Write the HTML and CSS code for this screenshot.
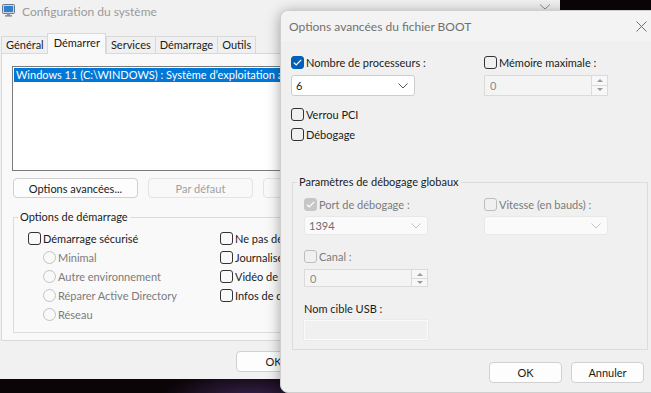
FILE: index.html
```html
<!DOCTYPE html>
<html lang="fr">
<head>
    <meta charset="UTF-8">
    <title>Configuration du système</title>
    <link rel="stylesheet" href="styles.css">
</head>
<body>

    <!-- fenêtre msconfig, en arrière-plan -->
    <div class="window msconfig">
        <div class="titlebar">
            <svg class="app-icon" width="14" height="14" viewBox="0 0 14 14">
                <rect x="0.5" y="1.5" width="12" height="9" rx="1" fill="#cfd6de" stroke="#6b7785"/>
                <rect x="2" y="3" width="9" height="6" fill="#2f7fd3"/>
                <rect x="5" y="10.5" width="3" height="2" fill="#8a95a3"/>
                <rect x="3" y="12.3" width="7" height="1.2" fill="#6b7785"/>
            </svg>
            <span class="title">Configuration du système</span>
            <svg class="title-chevron" width="12" height="6" viewBox="0 0 12 6">
                <polyline points="1,0.5 6,5 11,0.5" fill="none" stroke="#8a8a8a"/>
            </svg>
        </div>

        <div class="tabs">
            <div class="tab">Général</div>
            <div class="tab active">Démarrer</div>
            <div class="tab">Services</div>
            <div class="tab">Démarrage</div>
            <div class="tab">Outils</div>
        </div>

        <div class="tabpanel">
            <div class="oslist">
                <div class="os-item selected"><span class="cut-os">Windows 11 (C:\WINDOWS) : Système d’exploitation actuel</span></div>
            </div>

            <div class="btn-row">
                <button class="btn btn-wide">Options avancées...</button>
                <button class="btn btn-mid" disabled>Par défaut</button>
                <button class="btn btn-mid" disabled aria-label="Supprimer"></button>
            </div>

            <fieldset class="group boot-group">
                <legend>Options de démarrage</legend>
                <div class="boot-grid">
                    <div class="boot-col">
                        <label class="opt"><span class="check"></span>Démarrage sécurisé</label>
                        <label class="opt sub disabled"><span class="radio"></span>Minimal</label>
                        <label class="opt sub disabled"><span class="radio"></span>Autre environnement</label>
                        <label class="opt sub disabled"><span class="radio"></span>Réparer Active Directory</label>
                        <label class="opt sub disabled"><span class="radio"></span>Réseau</label>
                    </div>
                    <div class="boot-col narrow">
                        <label class="opt"><span class="check"></span><span class="cut">Ne pas démarrer</span></label>
                        <label class="opt"><span class="check"></span><span class="cut">Journaliser</span></label>
                        <label class="opt"><span class="check"></span><span class="cut">Vidéo de base</span></label>
                        <label class="opt"><span class="check"></span><span class="cut">Infos de démarrage</span></label>
                    </div>
                </div>
            </fieldset>
        </div>

        <div class="footer">
            <button class="btn btn-std">OK</button>
        </div>
    </div>

    <!-- boîte de dialogue au premier plan -->
    <div class="dialog">
        <div class="dlg-title">
            <span>Options avancées du fichier BOOT</span>
            <span class="close">
                <svg width="11" height="11" viewBox="0 0 11 11">
                    <path d="M0.5 0.5 L10.5 10.5 M10.5 0.5 L0.5 10.5" stroke="#6f6f6f" stroke-width="1"/>
                </svg>
            </span>
        </div>

        <div class="dlg-body">
            <div class="dlg-grid">
                <div class="field">
                    <label class="opt"><span class="check checked">
                        <svg width="9" height="7" viewBox="0 0 9 7"><polyline points="0.8,3.6 3.2,5.9 8.2,0.9" fill="none" stroke="#fff" stroke-width="1.3"/></svg>
                    </span>Nombre de processeurs :</label>
                    <div class="select select-main">
                        <span>6</span>
                        <svg width="10" height="6" viewBox="0 0 10 6"><polyline points="0.5,0.5 5,5 9.5,0.5" fill="none" stroke="#555"/></svg>
                    </div>
                </div>
                <div class="field">
                    <label class="opt"><span class="check"></span>Mémoire maximale :</label>
                    <div class="spin spin-main disabled">
                        <span class="spin-value">0</span>
                        <span class="spin-btns">
                            <span class="spin-up"></span>
                            <span class="spin-down"></span>
                        </span>
                    </div>
                </div>
            </div>

            <label class="opt pci"><span class="check"></span>Verrou PCI</label>
            <label class="opt debug"><span class="check"></span>Débogage</label>

            <fieldset class="group debug-group">
                <legend>Paramètres de débogage globaux</legend>
                <div class="debug-grid">
                    <div class="field">
                        <label class="opt disabled"><span class="check checked grey">
                            <svg width="9" height="7" viewBox="0 0 9 7"><polyline points="0.8,3.6 3.2,5.9 8.2,0.9" fill="none" stroke="#fff" stroke-width="1.3"/></svg>
                        </span>Port de débogage :</label>
                        <div class="select select-off">
                            <span>1394</span>
                            <svg width="10" height="6" viewBox="0 0 10 6"><polyline points="0.5,0.5 5,5 9.5,0.5" fill="none" stroke="#c4c4c4"/></svg>
                        </div>
                    </div>
                    <div class="field">
                        <label class="opt disabled"><span class="check"></span>Vitesse (en bauds) :</label>
                        <div class="select select-off">
                            <span></span>
                            <svg width="10" height="6" viewBox="0 0 10 6"><polyline points="0.5,0.5 5,5 9.5,0.5" fill="none" stroke="#c4c4c4"/></svg>
                        </div>
                    </div>
                    <div class="field canal">
                        <label class="opt disabled"><span class="check"></span>Canal :</label>
                        <div class="spin spin-small disabled">
                            <span class="spin-value">0</span>
                            <span class="spin-btns">
                                <span class="spin-up"></span>
                                <span class="spin-down"></span>
                            </span>
                        </div>
                    </div>
                    <div></div>
                    <div class="field usb">
                        <div class="usb-label">Nom cible USB :</div>
                        <div class="textbox"></div>
                    </div>
                </div>
            </fieldset>

            <div class="dlg-buttons">
                <button class="btn btn-dlg">OK</button>
                <button class="btn btn-dlg">Annuler</button>
            </div>
        </div>
    </div>

</body>
</html>
```

FILE: styles.css
```css
* {
    box-sizing: border-box;
}

body {
    margin: 0;
    width: 651px;
    height: 393px;
    overflow: hidden;
    position: relative;
    font-family: Lato, "Noto Sans", sans-serif;
    font-size: 11px;
    color: #1b1b1b;
    background: radial-gradient(ellipse 90px 30px at 250px 400px, #3a2350, transparent), #0b0508; /* bureau sombre */
}

/* ---------- fenêtre msconfig ---------- */

.window {
    position: absolute;
    left: 0;
    top: 0;
    width: 560px;
    height: 379px;
    background: #f1f1f1;
}

.titlebar {
    height: 31px;
    display: flex;
    align-items: flex-start;
    padding: 3px 0 0 2px;
    color: #9a9a9a;
}

.app-icon {
    flex: none;
}

.title {
    margin-left: 6px;
    margin-top: 1px;
    line-height: 16px;
    font-size: 12px;
}

.title-chevron {
    margin-left: auto;
    margin-right: 9px;
    margin-top: 1px;
}

.tabs {
    display: flex;
    align-items: flex-end;
    height: 22px;
    padding-left: 1px;
}

.tab {
    height: 17px;
    line-height: 15px;
    padding: 0 4px;
    margin-right: -1px;
    border: 1px solid #d9d9d9;
    border-bottom: none;
    background: #f0f0f0;
}

.tab.active {
    height: 21px;
    line-height: 17px;
    padding: 0 5px 0 6px;
    margin: 0 0 -1px -1px;
    background: #f9f9f9;
    position: relative;
    z-index: 1;
}

.tabpanel {
    height: 288px;
    margin-left: 1px;
    border: 1px solid #d9d9d9;
    background: #f9f9f9;
    padding: 12px 10px 0 10px;
}

.oslist {
    height: 105px;
    border: 1px solid #7a7a7a;
    background: #fff;
    padding: 1px;
    overflow: hidden;
}

.os-item {
    line-height: 14px;
    padding-left: 2px;
    white-space: nowrap;
}

.os-item.selected {
    background: #0078d7;
    color: #fff;
}

.cut-os {
    display: block;
    width: 264px;
    overflow: hidden;
}

.btn-row {
    display: flex;
    gap: 10px;
    margin: 7px 0 0 1px;
}

.btn {
    height: 20px;
    padding: 0;
    font-family: inherit;
    font-size: 11px;
    color: #1b1b1b;
    background: #fdfdfd;
    border: 1px solid #d0d0d0;
    border-radius: 4px;
}

.btn:disabled {
    color: #a0a0a0;
    border-color: #e3e3e3;
    background: #f9f9f9;
}

.btn-wide {
    width: 125px;
}

.btn-mid {
    width: 105px;
}

.group {
    margin: 0;
    padding: 0;
    border: 1px solid #dcdcdc;
}

.group legend {
    margin-left: 4px;
    padding: 0 2px;
    line-height: 16px;
}

.boot-group {
    margin: 11px 0 0 1px;
    padding: 4px 0 8px 0;
}

.boot-grid {
    display: grid;
    grid-template-columns: 192px 1fr;
    padding-left: 14px;
}

.boot-col {
    display: flex;
    flex-direction: column;
}

.boot-col.narrow {
    width: 60px;
    overflow: hidden;
}

.cut {
    overflow: hidden;
}

.opt {
    display: flex;
    align-items: center;
    height: 19px;
    white-space: nowrap;
}

.opt.sub {
    padding-left: 15px;
}

.opt.disabled {
    color: #7b7b7b;
}

.check {
    flex: none;
    width: 13px;
    height: 13px;
    margin-right: 2px;
    border: 1px solid #333;
    border-radius: 3px;
    display: flex;
    align-items: center;
    justify-content: center;
}

.opt.disabled .check {
    border-color: #bdbdbd;
}

.check.checked {
    background: #005fb8;
    border-color: #005fb8;
}

.opt.disabled .check.grey {
    background: #c6c6c6;
    border-color: #c6c6c6;
}

.radio {
    flex: none;
    width: 13px;
    height: 13px;
    margin-right: 2px;
    border: 1px solid #c2c2c2;
    border-radius: 50%;
}

.footer {
    display: flex;
    padding: 10px 0 0 236px;
}

.btn-std {
    width: 75px;
    height: 21px;
}

/* ---------- boîte de dialogue ---------- */

.dialog {
    position: absolute;
    left: 280px;
    top: 10px;
    width: 385px;
    height: 383px;
    background: #f0f0f0;
    border: 1px solid #cfcfcf;
    border-radius: 8px;
    overflow: hidden;
    box-shadow: 0 2px 14px rgba(0, 0, 0, 0.35);
}

.dlg-title {
    height: 30px;
    display: flex;
    align-items: center;
    padding-left: 8px;
    background: #f3f3f3;
    color: #707070;
    font-size: 12px;
}

.close {
    margin-left: auto;
    width: 46px;
    display: flex;
    justify-content: center;
}

.dlg-body {
    padding: 13px 0 0 10px;
}

.dlg-grid {
    display: grid;
    grid-template-columns: 193px 1fr;
}

.field .opt {
    height: 16px;
}

.select {
    display: flex;
    align-items: center;
    justify-content: space-between;
    width: 124px;
    padding: 0 6px 0 4px;
}

.select-main {
    height: 21px;
    margin-top: 5px;
    background: #fff;
    border: 1px solid #cdcdcd;
    border-radius: 3px;
}

.select-off {
    height: 19px;
    margin-top: 4px;
    background: #fafafa;
    border: 1px solid #e8e8e8;
    border-radius: 3px;
    color: #6d6d6d;
}

.spin {
    display: flex;
    width: 124px;
    background: #f4f4f4;
    border: 1px solid #dadada;
    color: #8a8a8a;
}

.spin-main {
    height: 21px;
    margin-top: 5px;
}

.spin-small {
    height: 18px;
    margin-top: 5px;
}

.spin-value {
    flex: 1;
    padding-left: 5px;
    display: flex;
    align-items: center;
}

.spin-btns {
    width: 16px;
    display: flex;
    flex-direction: column;
    border-left: 1px solid #dadada;
}

.spin-up,
.spin-down {
    flex: 1;
    position: relative;
    background: #f7f7f7;
}

.spin-up {
    border-bottom: 1px solid #dadada;
}

.spin-up::after,
.spin-down::after {
    content: "";
    position: absolute;
    left: 5px;
    top: 3px;
    border-left: 3px solid transparent;
    border-right: 3px solid transparent;
}

.spin-up::after {
    border-bottom: 3px solid #9a9a9a;
}

.spin-down::after {
    top: 2px;
    border-top: 3px solid #9a9a9a;
}

.pci {
    height: 16px;
    margin-top: 10px;
}

.debug {
    height: 16px;
    margin-top: 4px;
}

.debug-group {
    width: 356px;
    margin: 32px 0 0 1px;
    padding: 6px 0 9px 0;
}

.debug-grid {
    display: grid;
    grid-template-columns: 180px 1fr;
    padding-left: 11px;
}

.canal {
    margin-top: 13px;
}

.usb {
    margin-top: 14px;
}

.usb-label {
    line-height: 16px;
}

.textbox {
    width: 124px;
    height: 20px;
    margin-top: 3px;
    border: 1px solid #fafafa;
    background: #f0f0f0;
    box-shadow: 0 0 0 0.5px #e4e4e4;
}

.dlg-buttons {
    display: flex;
    justify-content: flex-end;
    gap: 9px;
    padding-right: 20px;
    margin-top: 12px;
}

.btn-dlg {
    width: 73px;
    height: 21px;
    background: #fdfdfd;
}
```
